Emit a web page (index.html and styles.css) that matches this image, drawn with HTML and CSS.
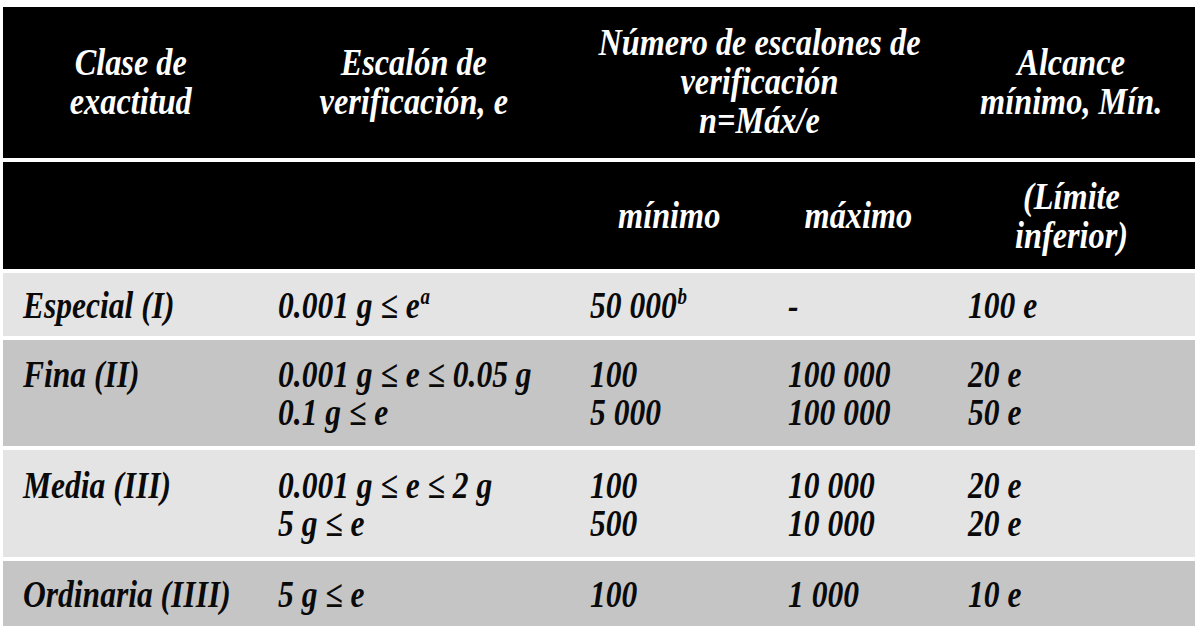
FILE: index.html
```html
<!DOCTYPE html>
<html lang="es">
<head>
<meta charset="utf-8">
<title>Clases de exactitud</title>
<link rel="stylesheet" href="styles.css">
</head>
<body>
<div class="sheet">
  <table class="grid">
    <colgroup>
      <col class="c1"><col class="c2"><col class="c3"><col class="c4"><col class="c5">
    </colgroup>
    <thead>
      <tr class="h1">
        <th><span class="t">Clase de<br>exactitud</span></th>
        <th><span class="t">Escalón de<br>verificación, e</span></th>
        <th colspan="2"><span class="t">Número de escalones de<br>verificación<br>n=Máx/e</span></th>
        <th><span class="t">Alcance<br>mínimo, Mín.</span></th>
      </tr>
      <tr class="h2">
        <th></th>
        <th></th>
        <th><span class="t">mínimo</span></th>
        <th><span class="t">máximo</span></th>
        <th><span class="t">(Límite<br>inferior)</span></th>
      </tr>
    </thead>
    <tbody>
      <tr class="r1 light">
        <td><span class="t">Especial (I)</span></td>
        <td><span class="t">0.001 g ≤ e<sup>a</sup></span></td>
        <td><span class="t">50 000<sup>b</sup></span></td>
        <td><span class="t">-</span></td>
        <td><span class="t">100 e</span></td>
      </tr>
      <tr class="r2 dark">
        <td><span class="t">Fina (II)<br>&nbsp;</span></td>
        <td><span class="t">0.001 g ≤ e ≤ 0.05 g<br>0.1 g ≤ e</span></td>
        <td><span class="t">100<br>5 000</span></td>
        <td><span class="t">100 000<br>100 000</span></td>
        <td><span class="t">20 e<br>50 e</span></td>
      </tr>
      <tr class="r3 light">
        <td><span class="t">Media (III)<br>&nbsp;</span></td>
        <td><span class="t">0.001 g ≤ e ≤ 2 g<br>5 g ≤ e</span></td>
        <td><span class="t">100<br>500</span></td>
        <td><span class="t">10 000<br>10 000</span></td>
        <td><span class="t">20 e<br>20 e</span></td>
      </tr>
      <tr class="r4 dark">
        <td><span class="t">Ordinaria (IIII)</span></td>
        <td><span class="t">5 g ≤ e</span></td>
        <td><span class="t">100</span></td>
        <td><span class="t">1 000</span></td>
        <td><span class="t">10 e</span></td>
      </tr>
    </tbody>
  </table>
</div>
</body>
</html>
```

FILE: styles.css
```css
html, body {
  margin: 0;
  padding: 0;
  background: #ffffff;
}

.sheet {
  padding: 3px 5px 0 3px;
  width: 1192px;
}

.grid {
  width: 1192px;
  table-layout: fixed;
  border-collapse: separate;
  border-spacing: 0 4px;
  font-family: "Liberation Serif", "Times New Roman", serif;
  font-style: italic;
  font-weight: bold;
  font-size: 38px;
  line-height: 38px;
}

.c1 { width: 255px; }
.c2 { width: 312px; }
.c3 { width: 198px; }
.c4 { width: 180px; }
.c5 { width: 247px; }

.grid th {
  background: #000000;
  color: #ffffff;
  padding: 0;
  text-align: center;
  vertical-align: middle;
  font-weight: bold;
  line-height: 39px;
  white-space: nowrap;
  overflow: visible;
}

.h1 th { height: 149px; padding-bottom: 2px; }
.h2 th { height: 107px; }

.grid td {
  padding: 0 0 0 20px;
  text-align: left;
  vertical-align: middle;
  color: #0a0a0a;
  white-space: nowrap;
}

.light td { background: #e4e4e4; }
.dark td { background: #c5c5c5; }

.r1 td { height: 63px; }
.r2 td { height: 106px; }
.r3 td { height: 107px; }
.r4 td { height: 65px; }

.t {
  display: inline-block;
  transform: scaleX(0.83);
  transform-origin: left center;
}

.grid th .t {
  transform: scaleX(0.85);
  transform-origin: center center;
}

.grid sup {
  font-size: 0.6em;
  line-height: 0;
  vertical-align: 0.6em;
  margin-left: 1px;
}
```
